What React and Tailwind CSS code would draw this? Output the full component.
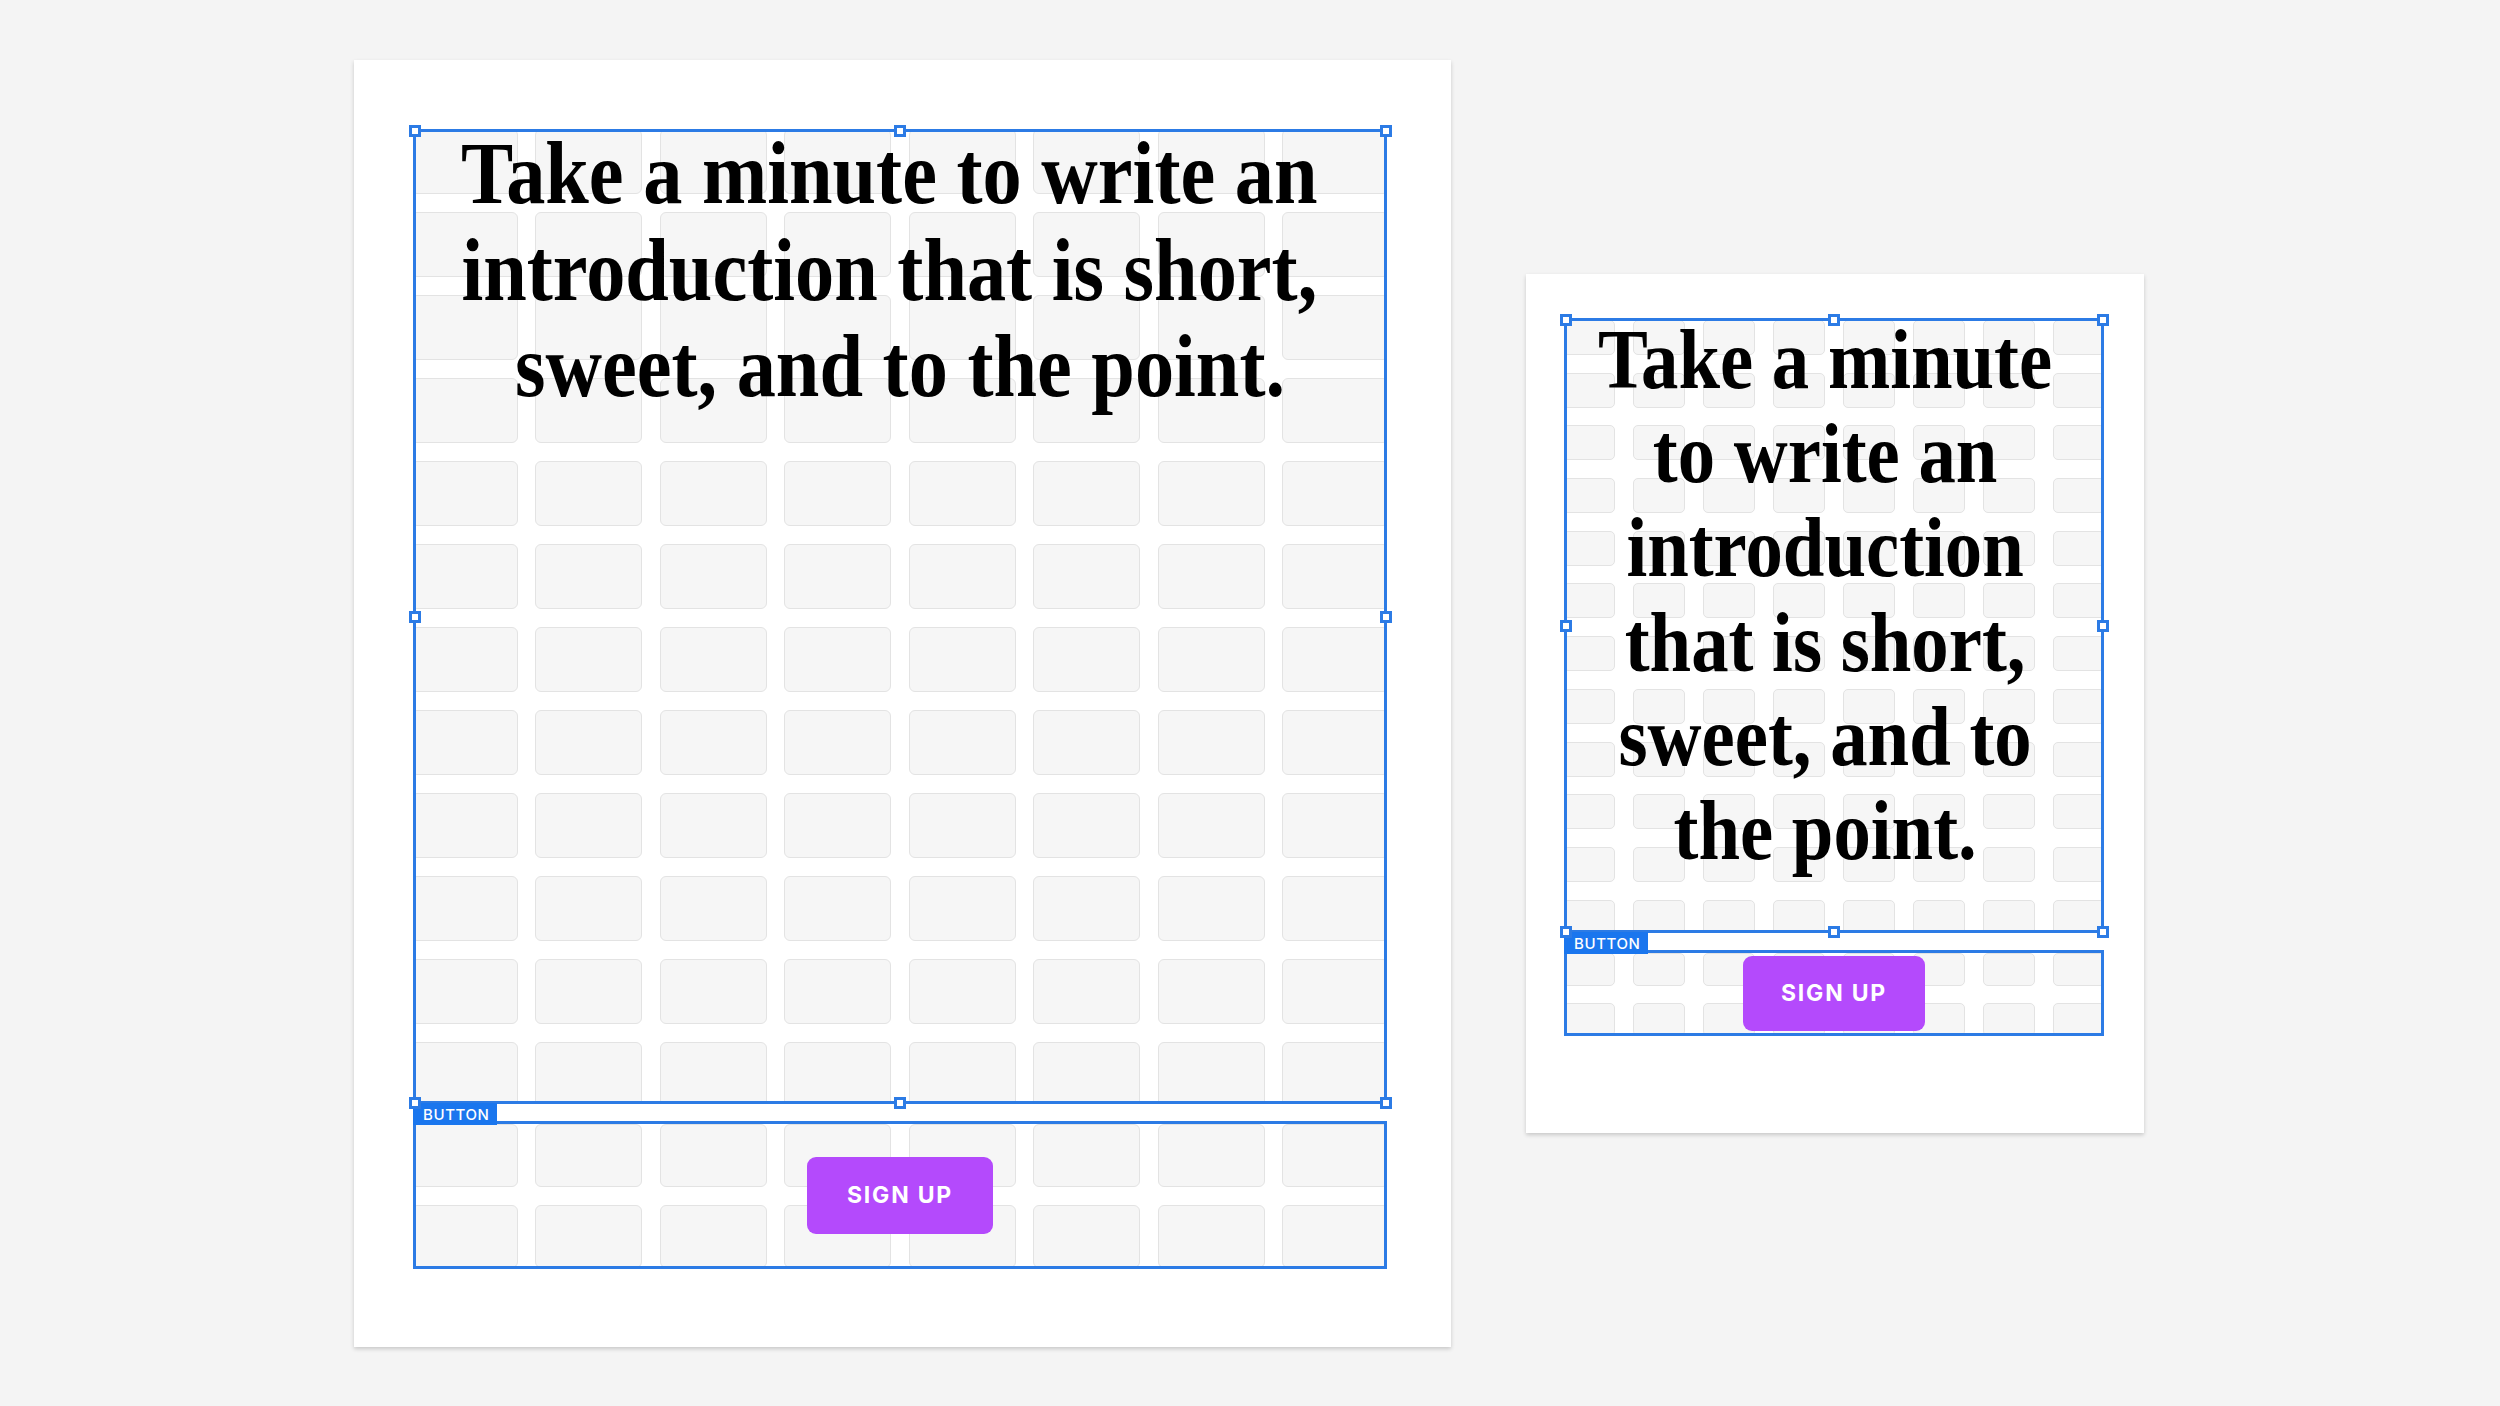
import React from "react";

const serif = "font-['Liberation_Serif','Times_New_Roman',serif]";
const sans = "font-['Inter','Liberation_Sans',sans-serif]";

// selection handle, sits on the frame's 3px border
const Handle = ({ className }) => (
    <span className={"absolute z-20 w-[12px] h-[12px] bg-white border-[3px] border-[#2c7be5] " + className} />
);

const Handles = () => (
    <>
        <Handle className="-left-[7.5px] -top-[7.5px]" />
        <Handle className="left-1/2 -translate-x-1/2 -top-[7.5px]" />
        <Handle className="-right-[7.5px] -top-[7.5px]" />
        <Handle className="-left-[7.5px] top-1/2 -translate-y-1/2" />
        <Handle className="-right-[7.5px] top-1/2 -translate-y-1/2" />
        <Handle className="-left-[7.5px] -bottom-[7.5px]" />
        <Handle className="left-1/2 -translate-x-1/2 -bottom-[7.5px]" />
        <Handle className="-right-[7.5px] -bottom-[7.5px]" />
    </>
);

const GridBg = ({ rows, gridClass, cellClass }) => (
    <div className="absolute inset-0 overflow-hidden">
        <div className={"grid justify-center " + gridClass}>
            {Array.from({ length: rows * 8 }).map((_, i) => (
                <div key={i} className={"border border-[#e3e3e3] bg-[#f6f6f6] " + cellClass} />
            ))}
        </div>
    </div>
);

const Label = () => (
    <span className={"relative z-10 flex items-center h-[22px] w-[84px] -mt-[1px] pl-[10px] bg-[#1a76ee] text-white text-[15px] font-medium tracking-[0.6px] leading-none " + sans}>
        BUTTON
    </span>
);

const SignUp = ({ className }) => (
    <button className={"relative z-10 flex items-center justify-center rounded-[9px] bg-[#b44afc] text-white text-[23px] font-bold tracking-[1.8px] leading-none " + sans + " " + className}>
        SIGN UP
    </button>
);

const LargeCard = () => (
    <div className="w-[1097px] h-[1287px] bg-white shadow-[0_2px_4px_rgba(0,0,0,0.18)] pl-[59px] pt-[69px]">
        {/* Text frame */}
        <div className="relative w-[974px] h-[975px] border-[3px] border-[#2c7be5]">
            <GridBg
                rows={12}
                gridClass="-mt-[3px] grid-cols-[repeat(8,107px)] auto-rows-[65px] gap-x-[17.5px] gap-y-[18px]"
                cellClass="rounded-[6px]"
            />
            <Handles />
            <div className={"relative z-10 -mt-[6px] text-center text-black font-bold text-[88px] leading-[96.5px] scale-x-[0.89] whitespace-nowrap " + serif}>
                <span className="block -translate-x-[12px]">Take a minute to write an</span>
                <span className="block -translate-x-[12px]">introduction that is short,</span>
                <span className="block">sweet, and to the point.</span>
            </div>
        </div>

        <div className="h-[18px]">
            <Label />
        </div>

        {/* Button frame */}
        <div className="relative w-[974px] h-[148px] border-[3px] border-[#2c7be5] flex items-center justify-center">
            <GridBg
                rows={2}
                gridClass="grid-cols-[repeat(8,107px)] auto-rows-[63px] gap-x-[17.5px] gap-y-[18px]"
                cellClass="rounded-[6px]"
            />
            <SignUp className="w-[186px] h-[77px]" />
        </div>
    </div>
);

const SmallCard = () => (
    <div className="w-[618px] h-[859px] mt-[214px] bg-white shadow-[0_2px_4px_rgba(0,0,0,0.18)] pl-[38px] pt-[44px]">
        {/* Text frame */}
        <div className="relative w-[540px] h-[615px] border-[3px] border-[#2c7be5]">
            <GridBg
                rows={12}
                gridClass="-mt-[1px] grid-cols-[repeat(8,52.5px)] auto-rows-[35px] gap-x-[17.5px] gap-y-[17.7px]"
                cellClass="rounded-[5px]"
            />
            <Handles />
            <div className={"relative z-10 -mt-[8px] pr-[20px] text-center text-black font-bold text-[84px] leading-[94.2px] scale-x-[0.89] whitespace-nowrap " + serif}>
                <span className="block">Take a minute</span>
                <span className="block">to write an</span>
                <span className="block">introduction</span>
                <span className="block">that is short,</span>
                <span className="block">sweet, and to</span>
                <span className="block">the point.</span>
            </div>
        </div>

        <div className="h-[18px]">
            <Label />
        </div>

        {/* Button frame */}
        <div className="relative w-[540px] h-[86px] border-[3px] border-[#2c7be5] flex items-center justify-center">
            <GridBg
                rows={2}
                gridClass="grid-cols-[repeat(8,52.5px)] auto-rows-[33px] gap-x-[17.5px] gap-y-[17px]"
                cellClass="rounded-[5px]"
            />
            <SignUp className="w-[182px] h-[75px]" />
        </div>
    </div>
);

export default function App() {
    return (
        <div className="w-[2500px] h-[1406px] bg-[#f4f4f4] overflow-hidden flex items-start gap-[75px] pl-[354px] pt-[60px]">
            <LargeCard />
            <SmallCard />
        </div>
    );
}
